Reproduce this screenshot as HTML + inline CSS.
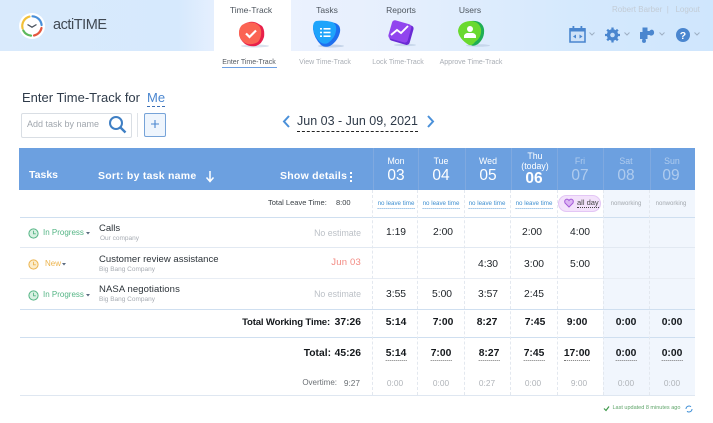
<!DOCTYPE html>
<html><head><meta charset="utf-8">
<style>
html,body{margin:0;padding:0;background:#fff}
#p{position:relative;width:713px;height:423px;overflow:hidden;background:#fff;font-family:"Liberation Sans",sans-serif;color:#2b3238}
#p div,#p span.a,#p svg{position:absolute}
.t{white-space:nowrap;line-height:1}
.c{transform:translateX(-50%);white-space:nowrap;line-height:1;text-align:center}
.r{transform:translateX(-100%);white-space:nowrap;line-height:1}
.h{background:#cfdff0;height:1px}
.v{width:0;border-left:1px dashed #e3e8ef}
.hv{width:1px;background:#7fa9e0;top:148px;height:42px}
.n{font-size:10.300px;color:#1d2227;margin-top:1px}
.b{font-size:10.300px;color:#14181c;font-weight:bold;margin-top:1px}
.g{font-size:8.300px;color:#b0b4b9;margin-top:1px}
.u{border-bottom:1px dotted #777;padding-bottom:1px}
.nl{font-size:6.200px;color:#3f8fd0;border-bottom:1px dotted #6aa6dc;padding-bottom:1px;margin-top:1px}
.nw{font-size:6px;color:#a3a8ae;margin-top:1px}
.dn{font-size:8.800px;color:#fff}
.dd{font-size:15.500px;color:#fff}
</style></head><body><div id="p">

<!-- top bar -->
<div style="left:0;top:0;width:713px;height:51px;background:linear-gradient(90deg,#d9eafc 0,#d6e9fd 25%,#eef3fe 33%,#e6effd 55%,#d5e9fd 80%,#cfe6fd 100%)"></div>
<div style="left:214px;top:0;width:77px;height:51px;background:#fff"></div>

<!-- logo -->
<svg style="left:19px;top:13px" width="26" height="26" viewBox="0 0 26 26">
<circle cx="13" cy="13" r="13" fill="#fff"/>
<g fill="none" stroke-width="2.200" stroke-linecap="round">
<path d="M3.600 15.500A9.700 9.700 0 0 1 10.500 3.600" stroke="#f2c037"/>
<path d="M13.500 3.300A9.700 9.700 0 0 1 22.600 12" stroke="#4a90d9"/>
<path d="M22.500 15A9.700 9.700 0 0 1 15 22.500" stroke="#e4573f"/>
<path d="M12 22.600A9.700 9.700 0 0 1 4.300 17.500" stroke="#5cb85c"/>
</g>
<path d="M8.500 11.500L13 14.200L17.500 11.500" fill="none" stroke="#4d5560" stroke-width="1.300"/>
</svg>
<div class="t" style="left:53px;top:18px;font-size:14.500px;color:#414a53;letter-spacing:-.45px">actiTIME</div>

<!-- nav labels -->
<div class="c" style="left:251px;top:6px;font-size:8.500px;color:#4e565f">Time-Track</div>
<div class="c" style="left:327px;top:6px;font-size:8.500px;color:#4e565f">Tasks</div>
<div class="c" style="left:401px;top:6px;font-size:8.500px;color:#4e565f">Reports</div>
<div class="c" style="left:470px;top:6px;font-size:8.500px;color:#4e565f">Users</div>

<!-- red icon -->
<svg style="left:236px;top:20px" width="34" height="30" viewBox="0 0 34 30">
<ellipse cx="19" cy="26" rx="14" ry="1.500" fill="#c9d6e6" opacity=".7"/>
<path d="M8 4Q15 0 21 3L26 6Q29 10 28 17Q26 24 20 26Q14 27 9 24Q3 19 3 13Q3 7 8 4Z" fill="#e8204a"/>
<path d="M6 5Q13 1 19 3Q24 5 25 10Q26 17 22 22Q15 26 9 23Q3 19 3 13Q3 8 6 5Z" fill="#fb6453"/>
<path d="M10 13.500L13.500 17L20 10.500" fill="none" stroke="#fff" stroke-width="2.200"/>
</svg>
<!-- blue icon -->
<svg style="left:311px;top:20px" width="34" height="30" viewBox="0 0 34 30">
<ellipse cx="20" cy="26" rx="13" ry="1.500" fill="#bccde3" opacity=".8"/>
<path d="M5 2Q14 0 24 3Q30 5 29 12Q27 21 19 26Q14 28 10 25Q3 18 2 9Q2 3 5 2Z" fill="#1f6fee"/>
<path d="M5 1Q14 0 21 2Q26 4 25 11Q24 18 17 23Q13 25 9 22Q3 16 2 8Q2 2 5 1Z" fill="#1ea4fb"/>
<g fill="#fff"><rect x="9" y="8" width="2" height="1.600"/><rect x="12.500" y="8" width="7" height="1.600"/><rect x="9" y="11.700" width="2" height="1.600"/><rect x="12.500" y="11.700" width="7" height="1.600"/><rect x="9" y="15.400" width="2" height="1.600"/><rect x="12.500" y="15.400" width="7" height="1.600"/></g>
</svg>
<!-- purple icon -->
<svg style="left:385px;top:18px" width="34" height="30" viewBox="0 0 34 30">
<ellipse cx="20" cy="27" rx="11" ry="1.300" fill="#bccde3" opacity=".7"/>
<rect x="6" y="5" width="21" height="20" rx="3" fill="#6a2ad4" transform="rotate(16 16 15)"/>
<rect x="5" y="4" width="20" height="19" rx="3" fill="#9145ee" transform="rotate(16 15 13)"/>
<path d="M6 17L12 12L16 15L23 8" fill="none" stroke="#fff" stroke-width="1.900"/>
</svg>
<!-- green icon -->
<svg style="left:457px;top:20px" width="34" height="30" viewBox="0 0 34 30">
<ellipse cx="21" cy="25.500" rx="12" ry="1.300" fill="#bccde3" opacity=".7"/>
<path d="M14 1Q25 0 27 9Q28 18 21 24Q16 27 14 25Z" fill="#1fae55"/>
<path d="M13 1Q22 1 24 9Q25 17 18 22Q15 26 12 25Q2 19 1 11Q2 2 13 1Z" fill="#6ad92f"/>
<circle cx="13" cy="9" r="3" fill="#fff"/><path d="M7 18V15.500Q8 13.500 10 13H16Q18 13.500 19 15.500V18Z" fill="#fff"/>
</svg>

<!-- subnav -->
<div class="c" style="left:249px;top:59px;font-size:7px;color:#555b62">Enter Time-Track</div>
<div style="left:222px;top:67px;width:55px;height:1px;background:#6da0e3"></div>
<div class="c" style="left:325px;top:59px;font-size:7px;color:#a9aeb5">View Time-Track</div>
<div class="c" style="left:398px;top:59px;font-size:7px;color:#a9aeb5">Lock Time-Track</div>
<div class="c" style="left:471px;top:59px;font-size:7px;color:#a9aeb5">Approve Time-Track</div>

<!-- top right -->
<div class="t" style="left:612px;top:6px;font-size:8px;color:#c3ccd6">Robert Barber &nbsp;|&nbsp; &nbsp;Logout</div>
<svg style="left:568px;top:25px" width="140" height="20" viewBox="0 0 140 20">
<g fill="#4a86cf">
<path d="M2 4H17V17H2Z" fill="#cfe2f8" stroke="#4a86cf" stroke-width="1.600"/>
<rect x="1.500" y="3" width="16" height="3.500"/><rect x="4.500" y="1" width="1.800" height="3"/><rect x="12.500" y="1" width="1.800" height="3"/>
<path d="M5 11.500L8 9.500V13.500ZM14.500 11.500L11.500 9.500V13.500Z"/>
<g stroke="#4a86cf" stroke-width="2.300"><path d="M44.500 2.500V17.500M37 10H52M39.200 4.700L49.800 15.300M49.800 4.700L39.200 15.300"/></g>
<circle cx="44.500" cy="10" r="5.700"/>
<circle cx="44.500" cy="10" r="2.300" fill="#c6def8"/>
<path d="M74.500 2.500H79.500V6H81.500Q83 3.800 85 5Q87 7 85.500 9.500Q83.500 11.500 81.500 10H79.500V14H77.500Q79 17.500 76 18Q73 17.500 74.500 14H72V7H74.500Z"/>
<circle cx="115" cy="10" r="7"/>
</g>
<text x="115" y="14" font-size="10.500" font-weight="bold" fill="#fff" text-anchor="middle" font-family="Liberation Sans">?</text>
<g fill="none" stroke="#9fb0c4" stroke-width="1"><path d="M21.500 7.500L24 10L26.500 7.500M56.500 7.500L59 10L61.500 7.500M91.500 7.500L94 10L96.500 7.500M126.500 7.500L129 10L131.500 7.500"/></g>
</svg>

<!-- enter tt -->
<div class="t" style="left:22px;top:91px;font-size:13px;color:#2f3b4a">Enter Time-Track for</div>
<div class="t" style="left:147px;top:91px;font-size:13px;color:#4a86cf;border-bottom:1px dashed #3b6fb5;padding-bottom:2px">Me</div>
<div style="left:21px;top:113px;width:109px;height:23px;border:1px solid #d9dee4;border-radius:2px"></div>
<div class="t" style="left:27px;top:120px;font-size:9px;color:#a1a7ae">Add task by name</div>
<svg style="left:108px;top:115px" width="20" height="20" viewBox="0 0 20 20"><circle cx="8" cy="8" r="6" fill="none" stroke="#3f7fc4" stroke-width="2"/><path d="M12.500 12.500L17.500 17.500" stroke="#3f7fc4" stroke-width="2.400"/></svg>
<div style="left:137px;top:113px;width:1px;height:24px;background:#dfe3e8"></div>
<div style="left:144px;top:113px;width:20px;height:22px;border:1px solid #76a3d8;border-radius:2px;background:#eef5fd"></div>
<svg style="left:149px;top:118px" width="12" height="12" viewBox="0 0 12 12"><path d="M6 2V10M2 6H10" stroke="#4a86cf" stroke-width="1.100"/></svg>

<!-- date -->
<svg style="left:281px;top:114px" width="10" height="15" viewBox="0 0 10 15"><path d="M8 2L3 7.500L8 13" fill="none" stroke="#4a90d9" stroke-width="2"/></svg>
<svg style="left:426px;top:114px" width="10" height="15" viewBox="0 0 10 15"><path d="M2 2L7 7.500L2 13" fill="none" stroke="#4a90d9" stroke-width="2"/></svg>
<div class="t" style="left:297px;top:115px;font-size:12.500px;color:#2f3b4a;border-bottom:1px dashed #222;padding-bottom:3px">Jun 03 - Jun 09, 2021</div>

<!-- table shading -->
<div style="left:603px;top:190px;width:92px;height:205px;background:#f1f6fd"></div>
<!-- header -->
<div style="left:19px;top:148px;width:676px;height:42px;background:#6ca0e0"></div>
<div class="hv" style="left:373px"></div><div class="hv" style="left:418px"></div><div class="hv" style="left:465px"></div><div class="hv" style="left:511px"></div><div class="hv" style="left:557px"></div><div class="hv" style="left:603px"></div><div class="hv" style="left:650px"></div>

<div class="t" style="left:29px;top:170px;font-size:10.500px;font-weight:bold;color:#fff">Tasks</div>
<div class="t" style="left:98px;top:171px;font-size:10.500px;font-weight:bold;color:#fff;letter-spacing:.25px">Sort: by task name</div>
<svg style="left:205px;top:170px" width="10" height="13" viewBox="0 0 10 13"><path d="M5 1V11M1.500 7.500L5 11.500L8.500 7.500" fill="none" stroke="#fff" stroke-width="1.500"/></svg>
<div class="t" style="left:280px;top:171px;font-size:10.500px;font-weight:bold;color:#fff;letter-spacing:.25px">Show details</div>
<svg style="left:349px;top:172px" width="4" height="12" viewBox="0 0 4 12"><g fill="#fff"><rect x="1" y="0" width="2" height="2"/><rect x="1" y="4" width="2" height="2"/><rect x="1" y="8" width="2" height="2"/></g></svg>

<div class="c dn" style="left:396px;top:157px">Mon</div><div class="c dd" style="left:396px;top:168px">03</div>
<div class="c dn" style="left:441px;top:157px">Tue</div><div class="c dd" style="left:441px;top:168px">04</div>
<div class="c dn" style="left:488px;top:157px">Wed</div><div class="c dd" style="left:488px;top:168px">05</div>
<div class="c dn" style="left:535px;top:151px;line-height:10px;font-weight:normal">Thu<br>(today)</div><div class="c dd" style="left:534px;top:171px;font-weight:bold">06</div>
<div class="c dn" style="left:580px;top:157px;opacity:.45">Fri</div><div class="c dd" style="left:580px;top:168px;opacity:.45">07</div>
<div class="c dn" style="left:626px;top:157px;opacity:.45">Sat</div><div class="c dd" style="left:626px;top:168px;opacity:.45">08</div>
<div class="c dn" style="left:672px;top:157px;opacity:.45">Sun</div><div class="c dd" style="left:671px;top:168px;opacity:.45">09</div>

<!-- lines -->
<div class="h" style="left:20px;top:217px;width:675px"></div>
<div class="h" style="left:20px;top:247px;width:675px;background:#e2e9f2"></div>
<div class="h" style="left:20px;top:278px;width:675px;background:#e8edf4"></div>
<div class="h" style="left:20px;top:309px;width:675px"></div>
<div class="h" style="left:20px;top:337px;width:675px"></div>
<div class="h" style="left:20px;top:395px;width:675px;background:#dfe7f1"></div>
<div class="v" style="left:372px;top:190px;height:205px"></div>
<div class="v" style="left:417px;top:190px;height:205px"></div>
<div class="v" style="left:464px;top:190px;height:205px"></div>
<div class="v" style="left:510px;top:190px;height:205px"></div>
<div class="v" style="left:557px;top:190px;height:205px"></div>
<div class="v" style="left:603px;top:190px;height:205px"></div>
<div class="v" style="left:649px;top:190px;height:205px"></div>

<!-- leave row -->
<div class="t" style="left:268px;top:199px;font-size:7.500px;color:#3a4046">Total Leave Time:</div>
<div class="t" style="left:336px;top:199px;font-size:7.500px;color:#3a4046">8:00</div>
<div class="c nl" style="left:396px;top:200px">no leave time</div>
<div class="c nl" style="left:441px;top:200px">no leave time</div>
<div class="c nl" style="left:487px;top:200px">no leave time</div>
<div class="c nl" style="left:534px;top:200px">no leave time</div>
<div style="left:558px;top:195px;width:43px;height:17px;background:#f3e2fb;border:1px solid #e3c6f5;border-radius:9px;box-sizing:border-box"></div>
<svg style="left:564px;top:198px" width="10" height="10" viewBox="0 0 10 10"><path d="M5 9L1 5Q0 2 2.500 1.200Q4 1 5 2.500Q6 1 7.500 1.200Q10 2 9 5Z" fill="#dcb5f3" stroke="#a35ad8" stroke-width="1"/></svg>
<div class="t" style="left:577px;top:199px;font-size:7.500px;color:#444;border-bottom:1px dotted #444">all day</div>
<div class="c nw" style="left:626px;top:200px">nonworking</div>
<div class="c nw" style="left:671px;top:200px">nonworking</div>

<!-- task rows -->
<svg style="left:28px;top:228px" width="11" height="11" viewBox="0 0 11 11"><circle cx="5.500" cy="5.500" r="4.600" fill="#d8f0e2" stroke="#55b585" stroke-width="1"/><path d="M5.500 2.800V5.800H7.800" fill="none" stroke="#55b585" stroke-width=".9"/></svg>
<div class="t" style="left:43px;top:229px;font-size:8px;color:#55b585">In Progress</div>
<svg style="left:86px;top:232px" width="4" height="3" viewBox="0 0 4 3"><path d="M0 0H4L2 2.500Z" fill="#5a6a80"/></svg>
<div class="t" style="left:99px;top:224px;font-size:9.500px;color:#2b3238">Calls</div>
<div class="t" style="left:100px;top:236px;font-size:6.500px;color:#a7acb3">Our company</div>
<div class="r" style="left:361px;top:229px;font-size:8.800px;color:#bcc1c7">No estimate</div>

<svg style="left:28px;top:259px" width="11" height="11" viewBox="0 0 11 11"><circle cx="5.500" cy="5.500" r="4.600" fill="#fbeccb" stroke="#ecb44e" stroke-width="1"/><path d="M5.500 2.800V5.800H7.800" fill="none" stroke="#ecb44e" stroke-width=".9"/></svg>
<div class="t" style="left:45px;top:260px;font-size:8px;color:#ecb44e">New</div>
<svg style="left:62px;top:263px" width="4" height="3" viewBox="0 0 4 3"><path d="M0 0H4L2 2.500Z" fill="#5a6a80"/></svg>
<div class="t" style="left:99px;top:255px;font-size:9.500px;color:#2b3238;letter-spacing:.03px">Customer review assistance</div>
<div class="t" style="left:99px;top:267px;font-size:6.500px;color:#a7acb3">Big Bang Company</div>
<div class="r" style="left:361px;top:258px;font-size:9.500px;color:#f38a82;letter-spacing:.2px">Jun 03</div>

<svg style="left:28px;top:290px" width="11" height="11" viewBox="0 0 11 11"><circle cx="5.500" cy="5.500" r="4.600" fill="#d8f0e2" stroke="#55b585" stroke-width="1"/><path d="M5.500 2.800V5.800H7.800" fill="none" stroke="#55b585" stroke-width=".9"/></svg>
<div class="t" style="left:43px;top:291px;font-size:8px;color:#55b585">In Progress</div>
<svg style="left:86px;top:294px" width="4" height="3" viewBox="0 0 4 3"><path d="M0 0H4L2 2.500Z" fill="#5a6a80"/></svg>
<div class="t" style="left:99px;top:285px;font-size:9.500px;color:#2b3238;letter-spacing:.1px">NASA negotiations</div>
<div class="t" style="left:99px;top:297px;font-size:6.500px;color:#a7acb3">Big Bang Company</div>
<div class="r" style="left:361px;top:290px;font-size:8.800px;color:#bcc1c7">No estimate</div>

<!-- values -->
<div class="c n" style="left:396px;top:227px">1:19</div>
<div class="c n" style="left:443px;top:227px">2:00</div>
<div class="c n" style="left:532px;top:227px">2:00</div>
<div class="c n" style="left:580px;top:227px">4:00</div>

<div class="c n" style="left:488px;top:259px">4:30</div>
<div class="c n" style="left:534px;top:259px">3:00</div>
<div class="c n" style="left:580px;top:259px">5:00</div>

<div class="c n" style="left:396px;top:289px">3:55</div>
<div class="c n" style="left:442px;top:289px">5:00</div>
<div class="c n" style="left:488px;top:289px">3:57</div>
<div class="c n" style="left:534px;top:289px">2:45</div>

<!-- totals -->
<div class="r b" style="left:330px;top:317px;font-size:9.600px;letter-spacing:-.17px">Total Working Time:</div>
<div class="r b" style="left:361px;top:317px">37:26</div>
<div class="c b" style="left:396px;top:317px">5:14</div>
<div class="c b" style="left:443px;top:317px">7:00</div>
<div class="c b" style="left:487px;top:317px">8:27</div>
<div class="c b" style="left:535px;top:317px">7:45</div>
<div class="c b" style="left:577px;top:317px">9:00</div>
<div class="c b" style="left:626px;top:317px">0:00</div>
<div class="c b" style="left:672px;top:317px">0:00</div>

<div class="r b" style="left:331px;top:348px">Total:</div>
<div class="r b" style="left:361px;top:348px">45:26</div>
<div class="c b" style="left:396px;top:348px"><span class="u">5:14</span></div>
<div class="c b" style="left:441px;top:348px"><span class="u">7:00</span></div>
<div class="c b" style="left:489px;top:348px"><span class="u">8:27</span></div>
<div class="c b" style="left:534px;top:348px"><span class="u">7:45</span></div>
<div class="c b" style="left:577px;top:348px"><span class="u">17:00</span></div>
<div class="c b" style="left:626px;top:348px"><span class="u">0:00</span></div>
<div class="c b" style="left:672px;top:348px"><span class="u">0:00</span></div>

<div class="r" style="left:337px;top:379px;font-size:8px;color:#6b7075">Overtime:</div>
<div class="r" style="left:360px;top:379px;font-size:8.300px;color:#6b7075">9:27</div>
<div class="c g" style="left:395px;top:378px">0:00</div>
<div class="c g" style="left:441px;top:378px">0:00</div>
<div class="c g" style="left:487px;top:378px">0:27</div>
<div class="c g" style="left:533px;top:378px">0:00</div>
<div class="c g" style="left:579px;top:378px">9:00</div>
<div class="c g" style="left:626px;top:378px">0:00</div>
<div class="c g" style="left:672px;top:378px">0:00</div>

<!-- footer -->
<svg style="left:603px;top:405px" width="7" height="7" viewBox="0 0 7 7"><path d="M1 3.500L3 5.500L6 1.500" fill="none" stroke="#3f9a4b" stroke-width="1.200"/></svg>
<div class="t" style="left:612.500px;top:405.500px;font-size:5.500px;color:#5fa56a">Last updated 8 minutes ago</div>
<svg style="left:685px;top:405px" width="8" height="8" viewBox="0 0 8 8"><path d="M1 4A3 3 0 0 1 6 1.800M7 4A3 3 0 0 1 2 6.200" fill="none" stroke="#3f8fd6" stroke-width="1"/></svg>

</div></body></html>
